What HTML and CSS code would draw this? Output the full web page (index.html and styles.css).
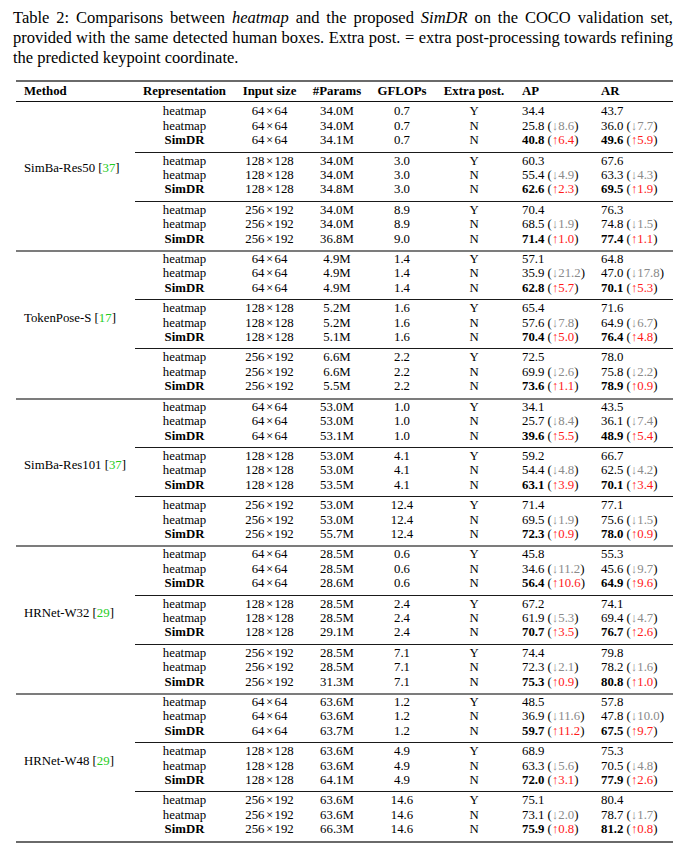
FILE: index.html
```html
<!DOCTYPE html>
<html>
<head>
<meta charset="utf-8">
<link rel="stylesheet" href="styles.css">
</head>
<body>
<div class="page">
<p class="caption"><span class="ln just">Table 2: Comparisons between <i>heatmap</i> and the proposed <i>SimDR</i> on the COCO validation set,</span><span class="ln just">provided with the same detected human boxes. Extra post. = extra post-processing towards refining</span><span class="ln">the predicted keypoint coordinate.</span></p>
<table class="results">
<colgroup><col class="c-method"><col class="c-rep"><col class="c-size"><col class="c-params"><col class="c-gflops"><col class="c-extra"><col class="c-ap"><col class="c-ar"></colgroup>
<thead>
<tr><th>Method</th><th>Representation</th><th>Input size</th><th>#Params</th><th>GFLOPs</th><th>Extra post.</th><th>AP</th><th>AR</th></tr>
</thead>
<tbody>
<tr class="f"><td class="method" rowspan="9">SimBa-Res50 [<span class="cite">37</span>]</td><td>heatmap</td><td>64<span class="x">×</span>64</td><td>34.0M</td><td>0.7</td><td>Y</td><td>34.4</td><td>43.7</td></tr>
<tr><td>heatmap</td><td>64<span class="x">×</span>64</td><td>34.0M</td><td>0.7</td><td>N</td><td>25.8 (<span class="dn">↓8.6</span>)</td><td>36.0 (<span class="dn">↓7.7</span>)</td></tr>
<tr class="e"><td><b>SimDR</b></td><td>64<span class="x">×</span>64</td><td>34.1M</td><td>0.7</td><td>N</td><td><b>40.8</b> (<span class="up">↑6.4</span>)</td><td><b>49.6</b> (<span class="up">↑5.9</span>)</td></tr>
<tr class="g"><td>heatmap</td><td>128<span class="x">×</span>128</td><td>34.0M</td><td>3.0</td><td>Y</td><td>60.3</td><td>67.6</td></tr>
<tr><td>heatmap</td><td>128<span class="x">×</span>128</td><td>34.0M</td><td>3.0</td><td>N</td><td>55.4 (<span class="dn">↓4.9</span>)</td><td>63.3 (<span class="dn">↓4.3</span>)</td></tr>
<tr class="e"><td><b>SimDR</b></td><td>128<span class="x">×</span>128</td><td>34.8M</td><td>3.0</td><td>N</td><td><b>62.6</b> (<span class="up">↑2.3</span>)</td><td><b>69.5</b> (<span class="up">↑1.9</span>)</td></tr>
<tr class="g"><td>heatmap</td><td>256<span class="x">×</span>192</td><td>34.0M</td><td>8.9</td><td>Y</td><td>70.4</td><td>76.3</td></tr>
<tr><td>heatmap</td><td>256<span class="x">×</span>192</td><td>34.0M</td><td>8.9</td><td>N</td><td>68.5 (<span class="dn">↓1.9</span>)</td><td>74.8 (<span class="dn">↓1.5</span>)</td></tr>
<tr class="e"><td><b>SimDR</b></td><td>256<span class="x">×</span>192</td><td>36.8M</td><td>9.0</td><td>N</td><td><b>71.4</b> (<span class="up">↑1.0</span>)</td><td><b>77.4</b> (<span class="up">↑1.1</span>)</td></tr>

<tr class="s"><td class="method" rowspan="9">TokenPose-S [<span class="cite">17</span>]</td><td>heatmap</td><td>64<span class="x">×</span>64</td><td>4.9M</td><td>1.4</td><td>Y</td><td>57.1</td><td>64.8</td></tr>
<tr><td>heatmap</td><td>64<span class="x">×</span>64</td><td>4.9M</td><td>1.4</td><td>N</td><td>35.9 (<span class="dn">↓21.2</span>)</td><td>47.0 (<span class="dn">↓17.8</span>)</td></tr>
<tr class="e"><td><b>SimDR</b></td><td>64<span class="x">×</span>64</td><td>4.9M</td><td>1.4</td><td>N</td><td><b>62.8</b> (<span class="up">↑5.7</span>)</td><td><b>70.1</b> (<span class="up">↑5.3</span>)</td></tr>
<tr class="g"><td>heatmap</td><td>128<span class="x">×</span>128</td><td>5.2M</td><td>1.6</td><td>Y</td><td>65.4</td><td>71.6</td></tr>
<tr><td>heatmap</td><td>128<span class="x">×</span>128</td><td>5.2M</td><td>1.6</td><td>N</td><td>57.6 (<span class="dn">↓7.8</span>)</td><td>64.9 (<span class="dn">↓6.7</span>)</td></tr>
<tr class="e"><td><b>SimDR</b></td><td>128<span class="x">×</span>128</td><td>5.1M</td><td>1.6</td><td>N</td><td><b>70.4</b> (<span class="up">↑5.0</span>)</td><td><b>76.4</b> (<span class="up">↑4.8</span>)</td></tr>
<tr class="g"><td>heatmap</td><td>256<span class="x">×</span>192</td><td>6.6M</td><td>2.2</td><td>Y</td><td>72.5</td><td>78.0</td></tr>
<tr><td>heatmap</td><td>256<span class="x">×</span>192</td><td>6.6M</td><td>2.2</td><td>N</td><td>69.9 (<span class="dn">↓2.6</span>)</td><td>75.8 (<span class="dn">↓2.2</span>)</td></tr>
<tr class="e"><td><b>SimDR</b></td><td>256<span class="x">×</span>192</td><td>5.5M</td><td>2.2</td><td>N</td><td><b>73.6</b> (<span class="up">↑1.1</span>)</td><td><b>78.9</b> (<span class="up">↑0.9</span>)</td></tr>

<tr class="s"><td class="method" rowspan="9">SimBa-Res101 [<span class="cite">37</span>]</td><td>heatmap</td><td>64<span class="x">×</span>64</td><td>53.0M</td><td>1.0</td><td>Y</td><td>34.1</td><td>43.5</td></tr>
<tr><td>heatmap</td><td>64<span class="x">×</span>64</td><td>53.0M</td><td>1.0</td><td>N</td><td>25.7 (<span class="dn">↓8.4</span>)</td><td>36.1 (<span class="dn">↓7.4</span>)</td></tr>
<tr class="e"><td><b>SimDR</b></td><td>64<span class="x">×</span>64</td><td>53.1M</td><td>1.0</td><td>N</td><td><b>39.6</b> (<span class="up">↑5.5</span>)</td><td><b>48.9</b> (<span class="up">↑5.4</span>)</td></tr>
<tr class="g"><td>heatmap</td><td>128<span class="x">×</span>128</td><td>53.0M</td><td>4.1</td><td>Y</td><td>59.2</td><td>66.7</td></tr>
<tr><td>heatmap</td><td>128<span class="x">×</span>128</td><td>53.0M</td><td>4.1</td><td>N</td><td>54.4 (<span class="dn">↓4.8</span>)</td><td>62.5 (<span class="dn">↓4.2</span>)</td></tr>
<tr class="e"><td><b>SimDR</b></td><td>128<span class="x">×</span>128</td><td>53.5M</td><td>4.1</td><td>N</td><td><b>63.1</b> (<span class="up">↑3.9</span>)</td><td><b>70.1</b> (<span class="up">↑3.4</span>)</td></tr>
<tr class="g"><td>heatmap</td><td>256<span class="x">×</span>192</td><td>53.0M</td><td>12.4</td><td>Y</td><td>71.4</td><td>77.1</td></tr>
<tr><td>heatmap</td><td>256<span class="x">×</span>192</td><td>53.0M</td><td>12.4</td><td>N</td><td>69.5 (<span class="dn">↓1.9</span>)</td><td>75.6 (<span class="dn">↓1.5</span>)</td></tr>
<tr class="e"><td><b>SimDR</b></td><td>256<span class="x">×</span>192</td><td>55.7M</td><td>12.4</td><td>N</td><td><b>72.3</b> (<span class="up">↑0.9</span>)</td><td><b>78.0</b> (<span class="up">↑0.9</span>)</td></tr>

<tr class="s"><td class="method" rowspan="9">HRNet-W32 [<span class="cite">29</span>]</td><td>heatmap</td><td>64<span class="x">×</span>64</td><td>28.5M</td><td>0.6</td><td>Y</td><td>45.8</td><td>55.3</td></tr>
<tr><td>heatmap</td><td>64<span class="x">×</span>64</td><td>28.5M</td><td>0.6</td><td>N</td><td>34.6 (<span class="dn">↓11.2</span>)</td><td>45.6 (<span class="dn">↓9.7</span>)</td></tr>
<tr class="e"><td><b>SimDR</b></td><td>64<span class="x">×</span>64</td><td>28.6M</td><td>0.6</td><td>N</td><td><b>56.4</b> (<span class="up">↑10.6</span>)</td><td><b>64.9</b> (<span class="up">↑9.6</span>)</td></tr>
<tr class="g"><td>heatmap</td><td>128<span class="x">×</span>128</td><td>28.5M</td><td>2.4</td><td>Y</td><td>67.2</td><td>74.1</td></tr>
<tr><td>heatmap</td><td>128<span class="x">×</span>128</td><td>28.5M</td><td>2.4</td><td>N</td><td>61.9 (<span class="dn">↓5.3</span>)</td><td>69.4 (<span class="dn">↓4.7</span>)</td></tr>
<tr class="e"><td><b>SimDR</b></td><td>128<span class="x">×</span>128</td><td>29.1M</td><td>2.4</td><td>N</td><td><b>70.7</b> (<span class="up">↑3.5</span>)</td><td><b>76.7</b> (<span class="up">↑2.6</span>)</td></tr>
<tr class="g"><td>heatmap</td><td>256<span class="x">×</span>192</td><td>28.5M</td><td>7.1</td><td>Y</td><td>74.4</td><td>79.8</td></tr>
<tr><td>heatmap</td><td>256<span class="x">×</span>192</td><td>28.5M</td><td>7.1</td><td>N</td><td>72.3 (<span class="dn">↓2.1</span>)</td><td>78.2 (<span class="dn">↓1.6</span>)</td></tr>
<tr class="e"><td><b>SimDR</b></td><td>256<span class="x">×</span>192</td><td>31.3M</td><td>7.1</td><td>N</td><td><b>75.3</b> (<span class="up">↑0.9</span>)</td><td><b>80.8</b> (<span class="up">↑1.0</span>)</td></tr>

<tr class="s"><td class="method mlast" rowspan="9">HRNet-W48 [<span class="cite">29</span>]</td><td>heatmap</td><td>64<span class="x">×</span>64</td><td>63.6M</td><td>1.2</td><td>Y</td><td>48.5</td><td>57.8</td></tr>
<tr><td>heatmap</td><td>64<span class="x">×</span>64</td><td>63.6M</td><td>1.2</td><td>N</td><td>36.9 (<span class="dn">↓11.6</span>)</td><td>47.8 (<span class="dn">↓10.0</span>)</td></tr>
<tr class="e"><td><b>SimDR</b></td><td>64<span class="x">×</span>64</td><td>63.7M</td><td>1.2</td><td>N</td><td><b>59.7</b> (<span class="up">↑11.2</span>)</td><td><b>67.5</b> (<span class="up">↑9.7</span>)</td></tr>
<tr class="g"><td>heatmap</td><td>128<span class="x">×</span>128</td><td>63.6M</td><td>4.9</td><td>Y</td><td>68.9</td><td>75.3</td></tr>
<tr><td>heatmap</td><td>128<span class="x">×</span>128</td><td>63.6M</td><td>4.9</td><td>N</td><td>63.3 (<span class="dn">↓5.6</span>)</td><td>70.5 (<span class="dn">↓4.8</span>)</td></tr>
<tr class="e"><td><b>SimDR</b></td><td>128<span class="x">×</span>128</td><td>64.1M</td><td>4.9</td><td>N</td><td><b>72.0</b> (<span class="up">↑3.1</span>)</td><td><b>77.9</b> (<span class="up">↑2.6</span>)</td></tr>
<tr class="g"><td>heatmap</td><td>256<span class="x">×</span>192</td><td>63.6M</td><td>14.6</td><td>Y</td><td>75.1</td><td>80.4</td></tr>
<tr><td>heatmap</td><td>256<span class="x">×</span>192</td><td>63.6M</td><td>14.6</td><td>N</td><td>73.1 (<span class="dn">↓2.0</span>)</td><td>78.7 (<span class="dn">↓1.7</span>)</td></tr>
<tr class="z"><td><b>SimDR</b></td><td>256<span class="x">×</span>192</td><td>66.3M</td><td>14.6</td><td>N</td><td><b>75.9</b> (<span class="up">↑0.8</span>)</td><td><b>81.2</b> (<span class="up">↑0.8</span>)</td></tr>
</tbody>
</table>
</div>
</body>
</html>
```
FILE: styles.css
```css
html, body {
  margin: 0;
  padding: 0;
  background: #ffffff;
}
body {
  font-family: "Liberation Serif", "Times New Roman", serif;
  color: #000000;
}
.page {
  padding: 8px 0 0 13px;
  width: 660px;
}
.caption {
  margin: 0;
  font-size: 16.5px;
  line-height: 19.8px;
}
.caption .ln {
  display: block;
  white-space: nowrap;
}
.caption .just {
  text-align: justify;
  text-align-last: justify;
  white-space: normal;
}
.results {
  border-collapse: collapse;
  table-layout: fixed;
  width: 657px;
  margin: 12.6px 0 0 3px;
  font-size: 12.8px;
  line-height: 14.4px;
}
.c-method { width: 119px; }
.c-rep { width: 99px; }
.c-size { width: 71px; }
.c-params { width: 64px; }
.c-gflops { width: 66px; }
.c-extra { width: 78px; }
.c-ap { width: 80px; }
.c-ar { width: 80px; }
.results th {
  font-weight: bold;
  text-align: center;
  white-space: nowrap;
  padding: 2px 0 3px 0;
  border-top: 2px solid #6a6a6a;
  border-bottom: 1px solid #111111;
}
.results td {
  text-align: center;
  white-space: nowrap;
  padding: 0;
}
.results th:first-child {
  text-align: left;
  padding-left: 8px;
}
.results th:nth-last-child(2),
.results td:nth-last-child(2) {
  text-align: left;
  padding-left: 9px;
}
.results th:nth-last-child(1),
.results td:nth-last-child(1) {
  text-align: left;
  padding-left: 8px;
}
.results tr.f td {
  padding-top: 2px;
}
.results tr.g td {
  padding-top: 1px;
  border-top: 1px solid #1a1a1a;
}
.results tr.s td {
  padding-top: 0;
  border-top: 2px solid #7c7c7c;
}
.results tr.e td {
  padding-bottom: 4px;
}
.results tr.z td {
  padding-bottom: 4px;
  border-bottom: 2px solid #6a6a6a;
}
.results tr td.method {
  text-align: left;
  vertical-align: top;
  padding: 58.5px 0 0 8px;
}
.results tr td.mlast {
  border-bottom: 2px solid #6a6a6a;
}
.x {
  margin: 0 1.4px;
}
.cite {
  color: #22cc22;
}
.up {
  color: #ff1a1a;
}
.dn {
  color: #8a8a8a;
}
```
